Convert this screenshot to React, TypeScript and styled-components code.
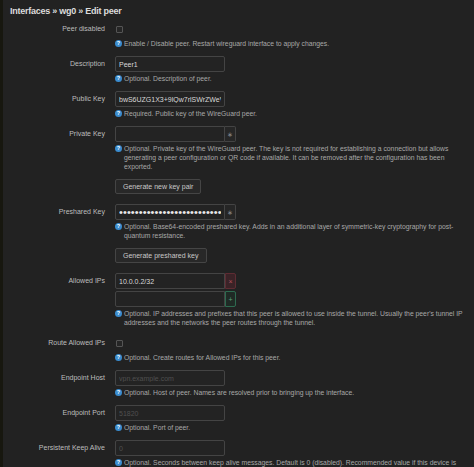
import React from "react";
import styled, { createGlobalStyle } from "styled-components";

const GlobalStyle = createGlobalStyle`
  html, body { margin: 0; padding: 0; background: #222222; }
  body { font-family: "Liberation Sans", Arial, sans-serif; }
  * { box-sizing: border-box; }
`;

const Page = styled.div`
  min-height: 467px;
  border-left: 3px solid #17170f;
  background: #222222;
  padding-right: 4px;
  overflow: hidden;
`;

const Header = styled.div`
  height: 21px;
  padding: 6px 0 0 7px;
`;

const Title = styled.h2`
  margin: 0;
  font-size: 9px;
  line-height: 11px;
  font-weight: bold;
  color: #dcdcdc;
  letter-spacing: -0.25px;
`;

const Section = styled.div<{ $pb?: number }>`
  display: grid;
  grid-template-columns: 102px 1fr;
  column-gap: 10px;
  padding-bottom: ${(p) => p.$pb ?? 8}px;
`;

const Label = styled.label`
  text-align: right;
  font-size: 7px;
  line-height: 16px;
  height: 16px;
  color: #bdbdbd;
  white-space: nowrap;
`;

const Value = styled.div`
  display: flex;
  flex-direction: column;
  gap: 2px;
  min-width: 0;
`;

const ControlRow = styled.div`
  display: flex;
  align-items: center;
  height: 16px;
`;

const TextInput = styled.input<{ $grouped?: boolean }>`
  width: 110px;
  height: 16px;
  margin: 0;
  padding: 0 3px;
  font-family: "Liberation Sans", Arial, sans-serif;
  font-size: 7px;
  color: #d8d8d8;
  background: #232323;
  border: 1px solid #444444;
  border-radius: ${(p) => (p.$grouped ? "2px 0 0 2px" : "2px")};
  outline: none;
  &::placeholder { color: #505050; }
`;

const PasswordInput = styled(TextInput)`
  font-size: 11px;
  letter-spacing: 0.1px;
  color: #e8e8e8;
`;

const addonColors = {
  neutral: { bg: "#262626", border: "#444444", fg: "#8a8a8a" },
  remove: { bg: "#3a2327", border: "#5e2c33", fg: "#b4505c" },
  add: { bg: "#1f2a25", border: "#2e6b50", fg: "#5aa07c" },
};

const Addon = styled.span<{ $kind: "neutral" | "remove" | "add" }>`
  width: 11px;
  height: 16px;
  display: flex;
  align-items: center;
  justify-content: center;
  font-size: 7px;
  line-height: 1;
  color: ${(p) => addonColors[p.$kind].fg};
  background: ${(p) => addonColors[p.$kind].bg};
  border: 1px solid ${(p) => addonColors[p.$kind].border};
  border-left-width: ${(p) => (p.$kind === "neutral" ? "0" : "1px")};
  border-radius: 0 2px 2px 0;
`;

const Checkbox = styled.span`
  display: inline-block;
  width: 7px;
  height: 7px;
  margin-left: 1px;
  border: 1px solid #555555;
  border-radius: 1px;
  background: #262626;
`;

const Help = styled.div`
  position: relative;
  padding-left: 9px;
  font-size: 6.8px;
  line-height: 9px;
  color: #a8a8a8;
`;

const HelpIcon = styled.span`
  position: absolute;
  left: 0;
  top: 1px;
  width: 7px;
  height: 7px;
  border-radius: 50%;
  background: #3a8ccf;
  color: #ffffff;
  font-size: 5.5px;
  font-weight: bold;
  line-height: 7px;
  text-align: center;
`;

const Button = styled.button`
  align-self: flex-start;
  height: 15px;
  margin: 0;
  padding: 0 7px;
  font-family: "Liberation Sans", Arial, sans-serif;
  font-size: 7px;
  color: #c8c8c8;
  background: #282828;
  border: 1px solid #454545;
  border-radius: 2px;
`;

const HelpText = ({ children }: { children: React.ReactNode }) => (
  <Help>
    <HelpIcon>?</HelpIcon>
    {children}
  </Help>
);

export default function App() {
  return (
    <>
      <GlobalStyle />
      <Page>
        <Header>
          <Title>Interfaces » wg0 » Edit peer</Title>
        </Header>

        <Section>
          <Label>Peer disabled</Label>
          <Value>
            <ControlRow>
              <Checkbox />
            </ControlRow>
            <HelpText>Enable / Disable peer. Restart wireguard interface to apply changes.</HelpText>
          </Value>
        </Section>

        <Section>
          <Label>Description</Label>
          <Value>
            <ControlRow>
              <TextInput defaultValue="Peer1" />
            </ControlRow>
            <HelpText>Optional. Description of peer.</HelpText>
          </Value>
        </Section>

        <Section>
          <Label>Public Key</Label>
          <Value>
            <ControlRow>
              <TextInput defaultValue="bwS6UZG1X3+9lQw7rlSWrZWeVA1xS4kQ2dT0=" />
            </ControlRow>
            <HelpText>Required. Public key of the WireGuard peer.</HelpText>
          </Value>
        </Section>

        <Section>
          <Label>Private Key</Label>
          <Value>
            <ControlRow>
              <PasswordInput type="password" $grouped defaultValue="" />
              <Addon $kind="neutral">∗</Addon>
            </ControlRow>
            <HelpText>
              Optional. Private key of the WireGuard peer. The key is not required for establishing a
              connection but allows generating a peer configuration or QR code if available. It can be
              removed after the configuration has been exported.
            </HelpText>
          </Value>
        </Section>

        <Section $pb={9}>
          <Label />
          <Value>
            <Button>Generate new key pair</Button>
          </Value>
        </Section>

        <Section>
          <Label>Preshared Key</Label>
          <Value>
            <ControlRow>
              <PasswordInput type="password" $grouped defaultValue="abcdefghijklmnopqrstuvwxyz0123456789" />
              <Addon $kind="neutral">∗</Addon>
            </ControlRow>
            <HelpText>
              Optional. Base64-encoded preshared key. Adds in an additional layer of symmetric-key
              cryptography for post-quantum resistance.
            </HelpText>
          </Value>
        </Section>

        <Section $pb={9}>
          <Label />
          <Value>
            <Button>Generate preshared key</Button>
          </Value>
        </Section>

        <Section>
          <Label>Allowed IPs</Label>
          <Value>
            <ControlRow>
              <TextInput $grouped defaultValue="10.0.0.2/32" />
              <Addon $kind="remove">×</Addon>
            </ControlRow>
            <ControlRow>
              <TextInput $grouped defaultValue="" />
              <Addon $kind="add">+</Addon>
            </ControlRow>
            <HelpText>
              Optional. IP addresses and prefixes that this peer is allowed to use inside the tunnel.
              Usually the peer's tunnel IP addresses and the networks the peer routes through the tunnel.
            </HelpText>
          </Value>
        </Section>

        <Section>
          <Label>Route Allowed IPs</Label>
          <Value>
            <ControlRow>
              <Checkbox />
            </ControlRow>
            <HelpText>Optional. Create routes for Allowed IPs for this peer.</HelpText>
          </Value>
        </Section>

        <Section>
          <Label>Endpoint Host</Label>
          <Value>
            <ControlRow>
              <TextInput placeholder="vpn.example.com" />
            </ControlRow>
            <HelpText>Optional. Host of peer. Names are resolved prior to bringing up the interface.</HelpText>
          </Value>
        </Section>

        <Section>
          <Label>Endpoint Port</Label>
          <Value>
            <ControlRow>
              <TextInput placeholder="51820" />
            </ControlRow>
            <HelpText>Optional. Port of peer.</HelpText>
          </Value>
        </Section>

        <Section>
          <Label>Persistent Keep Alive</Label>
          <Value>
            <ControlRow>
              <TextInput placeholder="0" />
            </ControlRow>
            <HelpText>
              Optional. Seconds between keep alive messages. Default is 0 (disabled). Recommended value if
              this device is behind a NAT is 25.
            </HelpText>
          </Value>
        </Section>
      </Page>
    </>
  );
}
